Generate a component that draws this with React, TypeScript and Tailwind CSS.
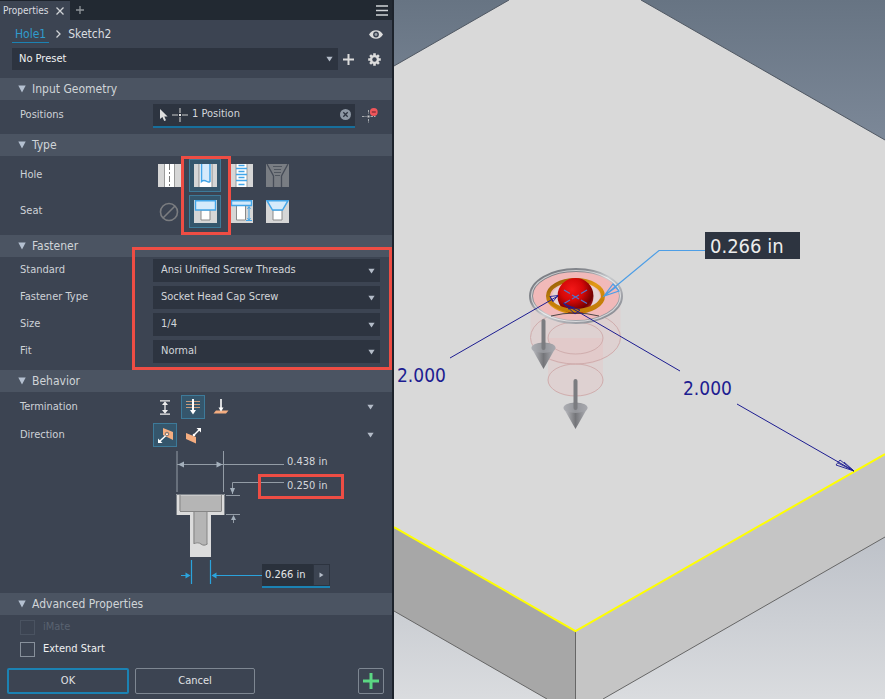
import React from "react";

const FONT = "font-['DejaVu_Sans_Condensed','DejaVu_Sans',sans-serif]";

function Section({ title, children }: { title: string; children: React.ReactNode }) {
  return (
    <section>
      <h2>
        <button type="button" className="flex h-[22px] w-full items-center gap-1.5 bg-[#4b5462] pl-[18px] text-xs text-[#d0d4d8]">
          <svg width="8" height="8" viewBox="0 0 8 8" aria-hidden="true">
            <path d="M0.3 0.5h7.4L4 7.5z" fill="#b4c0d0" />
          </svg>
          {title}
        </button>
      </h2>
      {children}
    </section>
  );
}

function Caret() {
  return (
    <svg className="pointer-events-none col-start-1 row-start-1 mr-[5px] justify-self-end" width="7" height="6" viewBox="0 0 7 6" aria-hidden="true">
      <path d="M0.4 0.8h6.2L3.5 5.4z" fill="#b4bcc8" />
    </svg>
  );
}

function SelectRow({ id, label, options }: { id: string; label: string; options: string[] }) {
  return (
    <div className="flex items-center pr-3">
      <label htmlFor={id} className="w-[133px] shrink-0">{label}</label>
      <div className="grid flex-1 items-center">
        <select id={id} className="col-start-1 row-start-1 h-[23px] w-full appearance-none bg-[#2d3440] px-2 text-[#d3d6da]">
          {options.map((o) => (
            <option key={o}>{o}</option>
          ))}
        </select>
        <Caret />
      </div>
    </div>
  );
}

function Tool({ label, active, size, children }: { label: string; active?: boolean; size: "lg" | "sm"; children: React.ReactNode }) {
  const box = size === "lg" ? "h-[33px] w-8" : "size-6";
  const look = active ? "border-[#3d7a99] bg-[#35566c]" : "border-transparent";
  return (
    <button type="button" aria-label={label} aria-pressed={!!active} className={`flex shrink-0 items-center justify-center border ${box} ${look}`}>
      {children}
    </button>
  );
}

function Block({ children, dim }: { children: React.ReactNode; dim?: boolean }) {
  return (
    <svg width="23" height="23" viewBox="0 0 23 23" aria-hidden="true">
      <rect width="23" height="23" fill={dim ? "#797d83" : "#d6d6d6"} />
      {children}
    </svg>
  );
}

function HoleTools() {
  return (
    <>
      <Tool size="lg" label="Simple hole">
        <Block>
          <rect x="7" width="9" height="23" fill="#fff" />
          <path d="M6.5 0v23M16.5 0v23" stroke="#9a9a9a" />
          <path d="M11.5 0v23" stroke="#777" strokeDasharray="6 2 2 2" />
        </Block>
      </Tool>
      <Tool size="lg" label="Clearance hole" active>
        <Block>
          <rect x="5" width="13" height="23" fill="#fff" />
          <path d="M5 0v23M18 0v23" stroke="#8e8e8e" />
          <path d="M7.5-1V17.500c2-2 4-1 5.500 0s2 1 3 0V-1z" fill="#d4eafb" stroke="#42a5e8" strokeWidth="1.500" />
        </Block>
      </Tool>
      <Tool size="lg" label="Tapped hole">
        <Block>
          <rect x="6" width="11" height="23" fill="#fff" />
          <path d="M6 0v23M17 0v23" stroke="#9a9a9a" />
          <path d="M6 4.500h11M6 10.500h11M6 16.500h11M8.500 1.500h6M8.500 7.500h6M8.500 13.500h6M8.500 20.500h6" stroke="#42a5e8" strokeWidth="1.400" />
        </Block>
      </Tool>
      <Tool size="lg" label="Taper tapped hole">
        <Block dim>
          <path d="M1 0l6.500 12v11M22 0l-6.500 12v11" fill="none" stroke="#464c57" strokeWidth="1.300" />
          <path d="M7 2.500h9M8 5.500h7M8 8.500h7M9 11.500h5" stroke="#50565f" strokeWidth="1.200" />
        </Block>
      </Tool>
    </>
  );
}

function SeatTools() {
  return (
    <>
      <Tool size="lg" label="No seat">
        <svg width="20" height="20" viewBox="0 0 20 20" fill="none" stroke="#7b7d80" strokeWidth="1.600" aria-hidden="true">
          <circle cx="10" cy="10" r="8.500" />
          <path d="M4 16L16 4" />
        </svg>
      </Tool>
      <Tool size="lg" label="Counterbore" active>
        <Block>
          <path d="M7 10h9v10H7z" fill="#fff" stroke="#8a8a8a" />
          <path d="M1.500.7h20V10h-20z" fill="#d4eafb" stroke="#42a5e8" strokeWidth="1.400" />
        </Block>
      </Tool>
      <Tool size="lg" label="Spotface">
        <Block>
          <path d="M6.500 5v15h9V5z" fill="#fff" stroke="#8a8a8a" />
          <path d="M1.500.7h20V5.500h-20z" fill="#d4eafb" stroke="#42a5e8" strokeWidth="1.400" />
          <path d="M19 7v13M16 20.500h6M17.500 9L19 6.500 20.500 9M17.500 18L19 20.500 20.500 18" fill="none" stroke="#42a5e8" />
        </Block>
      </Tool>
      <Tool size="lg" label="Countersink">
        <Block>
          <path d="M7 10h9v10H7z" fill="#fff" stroke="#8a8a8a" />
          <path d="M1 .7h21L16.500 10h-10z" fill="#d4eafb" stroke="#42a5e8" strokeWidth="1.400" />
        </Block>
      </Tool>
    </>
  );
}

function MoreButton({ label }: { label: string }) {
  return (
    <button type="button" aria-label={label} className="ml-auto mr-[18px]">
      <svg width="7" height="6" viewBox="0 0 7 6" aria-hidden="true">
        <path d="M0.4 0.8h6.2L3.5 5.4z" fill="#b4bcc8" />
      </svg>
    </button>
  );
}

function Bolt() {
  return (
    <svg className="block" width="196" height="146" viewBox="160 447 196 146" fill="none" aria-hidden="true">
      <g stroke="#939ca6">
        <path d="M177 451v41M223.500 451v41M177 464.500h107M232.500 494V482.500H284M226 495.500h14M226 514.500h14M233.500 523v-6" />
      </g>
      <g fill="#a4b0bc">
        <path d="M178 464.500l6-3v6zM222.500 464.500l-6-3v6zM232.500 494l-2.500-6h5zM233.500 515l-2.500 5h5z" />
      </g>
      <path d="M176 494h49v21h-14v42h-21v-42h-14z" fill="#dcdcdc" />
      <path d="M179.500 495.500h42V511h-14.500v33c-3 3-5 1-7-.5s-4-1-6.500 0V511h-14z" fill="#b5b5b5" />
      <path d="M180 495v16M221.500 495v16M180 511.500h41.500M194 511v33M207 511v33M194 543.500c3-1 5-1 7 .5s4 1.500 6.500 0" stroke="#858585" />
      <path d="M176.500 515V494.500h48V515" stroke="#7d838a" />
      <g stroke="#2ba3dc">
        <path d="M191.500 560v24M210.500 560v24M181 575.500h6M214 575.500h48" strokeWidth="1.200" />
      </g>
      <path d="M190.500 575.500l-5-3v6zM211.500 575.500l5-3v6z" fill="#2ba3dc" />
    </svg>
  );
}

function Panel() {
  return (
    <aside aria-label="Properties" className="flex w-[394px] shrink-0 flex-col border-r-2 border-[#1d232c] bg-[#3c4452] text-[11px] text-[#ced2d7]">
      <header className="flex h-5 items-stretch bg-[#222932]">
        <div className="flex w-[70px] items-center justify-between border-t border-[#1d232c] bg-[#3c4452] pl-[3px] pr-1.5 text-[10px]">
          <span className="text-[#dadde0]">Properties</span>
          <button type="button" aria-label="Close panel">
            <svg width="8" height="8" viewBox="0 0 8 8" stroke="#d0d3d6" strokeWidth="1.300"><path d="M.5.5l7 7M7.500.5l-7 7" /></svg>
          </button>
        </div>
        <button type="button" aria-label="Add tab" className="ml-1.5">
          <svg width="8" height="8" viewBox="0 0 8 8" stroke="#8f9499" strokeWidth="1.300"><path d="M4 0v8M0 4h8" /></svg>
        </button>
        <button type="button" aria-label="Panel menu" className="ml-auto mr-1">
          <svg width="12" height="11" viewBox="0 0 12 11" stroke="#d0d3d6" strokeWidth="1.400"><path d="M0 1h12M0 5.500h12M0 10h12" /></svg>
        </button>
      </header>

      <nav aria-label="Breadcrumb" className="flex h-7 items-center pl-3 text-xs">
        <a href="#hole1" className="border-b border-[#1b82b3] px-[3px] pt-px text-[#309ccd]">Hole1</a>
        <svg className="mx-[7px]" width="5" height="8" viewBox="0 0 5 8" fill="none" stroke="#d0d3d6" strokeWidth="1.300" aria-hidden="true"><path d="M.5.5L4 4 .5 7.500" /></svg>
        <span className="text-[#dadde0]">Sketch2</span>
        <button type="button" aria-label="Toggle preview" className="ml-auto mr-[9px]">
          <svg width="14" height="9" viewBox="0 0 14 9">
            <path d="M0 4.500C3-1.200 11-1.200 14 4.500 11 10.200 3 10.200 0 4.500z" fill="#dcdcdc" />
            <circle cx="7" cy="4.500" r="2.900" fill="#3c4452" />
            <circle cx="7" cy="4.500" r="1.400" fill="#9aa0a8" />
          </svg>
        </button>
      </nav>

      <div className="flex items-center pb-2 pl-3 pr-[11px]">
        <div className="grid flex-1 items-center">
          <select aria-label="Preset" className="col-start-1 row-start-1 h-[22px] w-full appearance-none bg-[#2d3440] px-[7px] text-[#f0f1f2]">
            <option>No Preset</option>
          </select>
          <Caret />
        </div>
        <button type="button" aria-label="Save preset" className="ml-[5px]">
          <svg width="11" height="11" viewBox="0 0 11 11" stroke="#dcdcdc" strokeWidth="2"><path d="M5.500 0v11M0 5.500h11" /></svg>
        </button>
        <button type="button" aria-label="Preset settings" className="ml-[14px]">
          <svg width="13" height="13" viewBox="-6.500 -6.500 13 13">
            <g stroke="#dcdcdc" strokeWidth="2.600"><path d="M0-6.300V6.300M-6.300 0H6.300M-4.400-4.400L4.400 4.400M4.400-4.400L-4.400 4.400" /></g>
            <circle r="4.600" fill="#dcdcdc" />
            <circle r="2.200" fill="#3c4452" />
          </svg>
        </button>
      </div>

      <Section title="Input Geometry">
        <div className="flex h-[34px] items-center pb-1 pl-5 pt-px">
          <label htmlFor="positions" className="w-[133px]">Positions</label>
          <div className="flex h-6 w-[202px] items-center border-b-2 border-[#176f9c] bg-[#2d3440] pl-[7px] pr-1">
            <svg width="8" height="12" viewBox="0 0 8 12" aria-hidden="true"><path d="M0 0v10l2.400-2L4.200 12 6 11.200 4.300 7.500H7.600z" fill="#dedede" /></svg>
            <svg className="ml-1" width="16" height="14" viewBox="0 0 16 14" stroke="#c9c9c9" strokeWidth="1.100" fill="none" aria-hidden="true"><path d="M8 0v5M8 9v5M0 7h6M10 7h6" /><path d="M7 6h2v2H7z" fill="#eee" stroke="none" /></svg>
            <input id="positions" readOnly defaultValue="1 Position" className="ml-1 min-w-0 flex-1 bg-transparent text-[#d3d6da] outline-none" />
            <button type="button" aria-label="Clear positions">
              <svg width="11" height="11" viewBox="0 0 11 11"><circle cx="5.500" cy="5.500" r="5.500" fill="#8e98a4" /><path d="M3.300 3.300l4.400 4.400M7.700 3.300L3.300 7.700" stroke="#2d3440" strokeWidth="1.300" /></svg>
            </button>
          </div>
          <button type="button" aria-label="Remove center point" className="ml-[7px]">
            <svg width="16" height="16" viewBox="0 0 16 16" fill="none"><path d="M6.500 2v4M6.500 11v4M0 8.500h4.500M8.500 8.500h5" stroke="#a9adb1" strokeDasharray="2.500 1" /><path d="M5.500 7.500h2v2h-2z" fill="#ccc" /><circle cx="11.800" cy="4" r="3.900" fill="#f0565a" /><path d="M9.800 4h4" stroke="#7d2e38" strokeWidth="1.300" /></svg>
          </button>
        </div>
      </Section>

      <Section title="Type">
        <div className="relative flex flex-col gap-[3px] pb-[7px] pl-5 pt-[3px]">
          <div className="flex items-center gap-1">
            <span className="w-[129px]">Hole</span>
            <HoleTools />
          </div>
          <div className="flex items-center gap-1">
            <span className="w-[129px]">Seat</span>
            <SeatTools />
          </div>
          <div className="pointer-events-none absolute left-[181px] top-0 h-[79px] w-[50px] border-[3px] border-[#ee4d44]" />
        </div>
      </Section>

      <Section title="Fastener">
        <div className="relative flex flex-col gap-1 pb-[7px] pl-5 pt-0.5">
          <SelectRow id="standard" label="Standard" options={["Ansi Unified Screw Threads"]} />
          <SelectRow id="fastener" label="Fastener Type" options={["Socket Head Cap Screw"]} />
          <SelectRow id="size" label="Size" options={["1/4"]} />
          <SelectRow id="fit" label="Fit" options={["Normal"]} />
          <div className="pointer-events-none absolute -top-[10px] bottom-0 left-[132px] right-0 border-[3px] border-[#ee4d44]" />
        </div>
      </Section>

      <Section title="Behavior">
        <div className="flex flex-col gap-1 pl-5 pt-[3px]">
          <div className="flex h-6 items-center gap-1">
            <span className="w-[129px]">Termination</span>
            <Tool size="sm" label="Distance">
              <svg width="12" height="15" viewBox="0 0 12 15" stroke="#eee" strokeWidth="1.300"><path d="M1 .8h10M1 14.200h10M6 3v9" /><path d="M3 5L6 1.200l3 3.800zM3 10L6 13.800l3-3.800z" fill="#eee" stroke="none" /></svg>
            </Tool>
            <Tool size="sm" label="Through all" active>
              <svg width="16" height="16" viewBox="0 0 16 16"><path d="M1 2.500h14M1 5.500h14M1 8.500h14" stroke="#c79a7c" strokeWidth="1.200" /><path d="M8 0v12" stroke="#fff" strokeWidth="2" /><path d="M5 11h6l-3 4.500z" fill="#fff" /></svg>
            </Tool>
            <Tool size="sm" label="To surface">
              <svg width="16" height="16" viewBox="0 0 16 16"><path d="M3 11.500h12.500L13 14.500H.5z" fill="#f4ad80" /><path d="M8 0v9" stroke="#fff" strokeWidth="1.600" /><path d="M5.500 8.500h5L8 12.800z" fill="#fff" /></svg>
            </Tool>
            <MoreButton label="More termination options" />
          </div>
          <div className="flex h-6 items-center gap-1">
            <span className="w-[129px]">Direction</span>
            <Tool size="sm" label="Default direction" active>
              <svg width="17" height="17" viewBox="0 0 17 17"><path d="M6 1l10 4v8L6 8z" fill="#f4ad80" /><path d="M3 14L10.500 7" stroke="#fff" strokeWidth="1.500" /><path d="M1 11.500V16h4.500z" fill="#fff" /><circle cx="10" cy="7" r="1.800" fill="none" stroke="#777" /></svg>
            </Tool>
            <Tool size="sm" label="Flipped direction">
              <svg width="17" height="17" viewBox="0 0 17 17"><path d="M1 6l10 4v6.500L1 12z" fill="#f4ad80" /><path d="M9 8l5-5" stroke="#fff" strokeWidth="1.500" /><path d="M11.500 1H16v4.500z" fill="#fff" /><circle cx="9" cy="8" r="1.300" fill="#fff" /></svg>
            </Tool>
            <MoreButton label="More direction options" />
          </div>
        </div>
        <div className="relative pl-40">
          <Bolt />
          <output className="absolute left-[287px] top-2 leading-[14px] text-[#d3d6da]">0.438 in</output>
          <output className="absolute left-[258px] top-[27px] h-[25px] w-[86px] border-[3px] border-[#ee4d44] pl-[26px] leading-[18px] text-[#d3d6da]">0.250 in</output>
          <div className="absolute left-[262px] top-[117px] flex h-6 w-[68px] border-b-2 border-[#1b82b3] bg-[#2a313c]">
            <input aria-label="Hole diameter" defaultValue="0.266 in" className="min-w-0 flex-1 bg-transparent pl-[3px] text-[#e4e6e8] outline-none" />
            <button type="button" aria-label="Diameter options" className="flex w-[17px] items-center justify-center border border-[#2d3440] bg-[#3c4452]">
              <svg width="5" height="6" viewBox="0 0 5 6"><path d="M.5.500v5L4.500 3z" fill="#b4bcc8" /></svg>
            </button>
          </div>
        </div>
      </Section>

      <Section title="Advanced Properties">
        <div className="flex flex-col gap-[7px] pb-[11px] pl-5 pt-[5px]">
          <label className="flex h-[15px] items-center gap-2 text-[#596270]">
            <input type="checkbox" disabled className="size-[15px] appearance-none border border-[#4a5361]" />
            iMate
          </label>
          <label className="flex h-[15px] items-center gap-2 text-[#f0f1f2]">
            <input type="checkbox" className="size-[15px] appearance-none border border-[#87909b]" />
            Extend Start
          </label>
        </div>
      </Section>

      <footer className="flex items-center gap-1.5 pl-[7px] pr-2">
        <button type="button" className="h-[26px] w-[122px] rounded-[2px] border-2 border-[#1b82b3] text-[#e0e2e4]">OK</button>
        <button type="button" className="h-[26px] w-[120px] rounded-[2px] border border-[#7e8792] text-[#e0e2e4]">Cancel</button>
        <button type="button" aria-label="Apply and add new" className="ml-auto flex size-[26px] items-center justify-center rounded-[2px] border border-[#7e8792]">
          <svg width="16" height="16" viewBox="0 0 16 16" stroke="#5bd783" strokeWidth="3"><path d="M8 0v16M0 8h16" /></svg>
        </button>
      </footer>
    </aside>
  );
}

function DepthArrow({ x, y }: { x: number; y: number }) {
  return (
    <g>
      <path d={`M${x - 12} ${y + 28}a12 5.500 0 0 1 24 0L${x} ${y + 49}z`} fill="url(#cone)" />
      <path d={`M${x - 12} ${y + 28}a12 5 0 0 0 24 0a12 5 0 0 0 -24 0`} fill="#a3a4aa" fillOpacity="0.700" />
      <path d={`M${x} ${y + 1}v27`} stroke="#7b7c80" strokeWidth="4" strokeLinecap="round" />
    </g>
  );
}

function Model() {
  return (
    <svg className="absolute inset-0 size-full" viewBox="394 0 491 699" preserveAspectRatio="xMinYMin slice" fill="none" role="img" aria-label="Plate with counterbored hole preview">
      <defs>
        <linearGradient id="sky" x1="0" y1="0" x2="0" y2="1">
          <stop offset="0" stopColor="#677483" />
          <stop offset="0.200" stopColor="#7c8898" />
          <stop offset="0.780" stopColor="#bfc3ca" />
          <stop offset="1" stopColor="#dadcdf" />
        </linearGradient>
        <radialGradient id="ball" cx="0.400" cy="0.320" r="0.700">
          <stop offset="0" stopColor="#f21818" />
          <stop offset="0.450" stopColor="#d60808" />
          <stop offset="0.850" stopColor="#720000" />
          <stop offset="1" stopColor="#a82020" />
        </radialGradient>
        <linearGradient id="cone"><stop offset="0" stopColor="#c4c5ca" /><stop offset="0.500" stopColor="#747579" /><stop offset="1" stopColor="#b2b3b9" /></linearGradient>
        <linearGradient id="steel" x1="0" y1="0" x2="1" y2="1"><stop offset="0" stopColor="#75787f" /><stop offset="0.300" stopColor="#85888e" /><stop offset="0.500" stopColor="#c9cbce" /><stop offset="0.750" stopColor="#a0a2a8" /><stop offset="1" stopColor="#7c7f86" /></linearGradient>
        <linearGradient id="gold" x1="0" y1="0" x2="1" y2="1"><stop offset="0" stopColor="#8a5600" /><stop offset="0.500" stopColor="#e39a16" /><stop offset="1" stopColor="#b87400" /></linearGradient>
      </defs>
      <rect x="394" width="491" height="699" fill="url(#sky)" />
      <path d="M394 66L509 0H641L885 140V454L575.500 631 394 527z" fill="#d9d9d9" />
      <path d="M394 66L509 0M641 0L885 140" stroke="#505863" />
      <path d="M394 527l181.500 104v68H547L394 611z" fill="#a7a7a7" />
      <path d="M575.500 631L885 454v83L603 699h-27.500z" fill="#c5c5c5" />
      <path d="M394 611l153 88M603 699l282-162M575.500 631v68" stroke="#666" />
      <path d="M394 527l181.500 104L885 454" stroke="#ffff00" strokeWidth="2" />

      <path d="M530.500 296v42a45 27 0 0 0 90 0v-42z" fill="#ff9a9a" fillOpacity="0.130" />
      <path d="M548 338v42a27.500 16 0 0 0 55 0v-42z" fill="#ff9a9a" fillOpacity="0.130" />
      <g stroke="#d0adad">
        <ellipse cx="575.500" cy="337.500" rx="45" ry="26.500" />
        <ellipse cx="575.500" cy="338" rx="27.500" ry="16" />
        <ellipse cx="575.500" cy="380" rx="27.500" ry="16" />
      </g>
      <ellipse cx="576" cy="296" rx="45" ry="26" fill="#f1b9b9" stroke="url(#steel)" strokeWidth="4" />
      <ellipse cx="576" cy="296" rx="44.500" ry="25.500" stroke="#fff" strokeOpacity="0.600" strokeWidth="1.200" />
      <ellipse cx="576" cy="296.500" rx="24" ry="14" fill="#e6d3d4" />
      <ellipse cx="575.500" cy="296" rx="27.500" ry="16" stroke="url(#gold)" strokeWidth="4" />
      <circle cx="575.500" cy="296" r="18" fill="url(#ball)" />
      <path d="M549 299a27.500 16 0 0 0 53 0" stroke="#c67f08" strokeWidth="4" />
      <path d="M551 316q24-6 48 0" stroke="#4a4444" />
      <path d="M564 290l6 3.500M572 295l7 4M581 300l6 3.500M587 290l-6 3.500M579 295l-7 4M570 300l-6 3.500" stroke="#5572c8" strokeWidth="1.300" />
      <DepthArrow x={543.5} y={320} />
      <DepthArrow x={575.5} y={380} />

      <g stroke="#1d1d91">
        <path d="M450 358l108-62M563 303l117 68M737 404l117 67" />
        <path d="M550 296.500l8-1-5 6zM550 296.500l3 5M564 304l11 10 5-4zM568 309l6-2M854 471l-18-6 4-5zM838 463l16 8-10-9" strokeWidth="0.900" />
      </g>
      <path d="M705 250.500H659L604 296M604 296l9-12 6 7zM604 296l12-9" stroke="#4d9ee6" strokeWidth="1.200" />
      <g fill="#1d1d91" fontSize="19" className="font-['DejaVu_Sans_Condensed','DejaVu_Sans',sans-serif]">
        <text x="397" y="382">2.000</text>
        <text x="683" y="395">2.000</text>
      </g>
    </svg>
  );
}

export default function App() {
  return (
    <div className={`flex min-h-screen w-full ${FONT}`}>
      <Panel />
      <main className="relative flex-1 overflow-hidden">
        <Model />
        <input aria-label="Diameter" defaultValue="0.266 in" className="absolute left-[311px] top-[232px] h-[27px] w-[95px] bg-[#2d3440] px-[5px] text-[20px] text-[#ececec] outline-none" />
      </main>
    </div>
  );
}
